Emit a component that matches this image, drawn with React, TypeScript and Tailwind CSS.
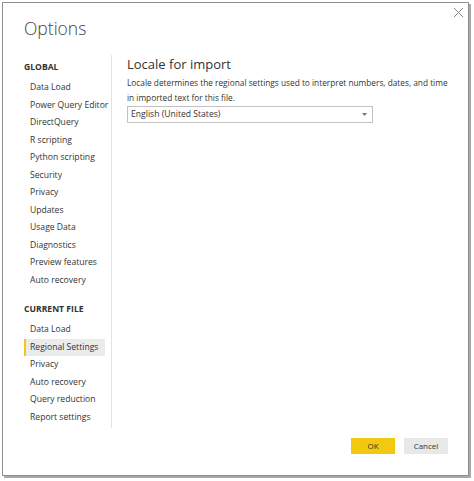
const globalItems = [
  'Data Load',
  'Power Query Editor',
  'DirectQuery',
  'R scripting',
  'Python scripting',
  'Security',
  'Privacy',
  'Updates',
  'Usage Data',
  'Diagnostics',
  'Preview features',
  'Auto recovery',
];

const fileItems = [
  'Data Load',
  'Regional Settings',
  'Privacy',
  'Auto recovery',
  'Query reduction',
  'Report settings',
];

const NavItem = ({ label, active }: { label: string; active?: boolean }) => (
  <div
    className={
      active
        ? 'flex h-[17.5px] w-[81px] items-center whitespace-nowrap border-l-2 border-[#f2c811] bg-[#ebebeb] pl-[4px] text-[8.6px] text-[#333]'
        : 'flex h-[17.5px] w-[81px] items-center whitespace-nowrap pl-[6px] text-[8.6px] text-[#333]'
    }
  >
    {label}
  </div>
);

export default function App() {
  return (
    <div className="h-[481px] w-[474px] bg-white pl-[2px] pt-[2px] font-['Open_Sans',sans-serif]">
      <div className="flex h-[474px] w-[467px] flex-col border border-[#8e8e8e] bg-white shadow-[2px_2px_0_#a9a9a9]">
        {/* header */}
        <div className="flex h-[52px] justify-between">
          <div className="pl-[21px] pt-[14px] text-[17.5px] font-light leading-[22px] text-[#444]">
            Options
          </div>
          <div className="pr-[4px] pt-[4px]">
            <svg width="11" height="11" viewBox="0 0 11 11">
              <path d="M1 1L10 10M10 1L1 10" stroke="#8a8a8a" strokeWidth="1" fill="none" />
            </svg>
          </div>
        </div>

        {/* body */}
        <div className="flex h-[373px]">
          <div className="w-[109px] border-r border-[#e3e3e3] pl-[21px]">
            <div className="mt-[5px] mb-[5px] h-[14px] text-[8.6px] leading-[14px] font-bold text-[#333]">
              GLOBAL
            </div>
            {globalItems.map((item) => (
              <NavItem key={'g' + item} label={item} />
            ))}
            <div className="mt-[13px] mb-[5px] h-[14px] text-[8.6px] leading-[14px] font-bold text-[#333]">
              CURRENT FILE
            </div>
            {fileItems.map((item) => (
              <NavItem key={'f' + item} label={item} active={item === 'Regional Settings'} />
            ))}
          </div>

          <div className="flex-1 pl-[15px]">
            <div className="h-[18px] text-[13px] leading-[18px] text-[#333]">Locale for import</div>
            <p className="mt-[3px] w-[322px] text-[8.3px] leading-[14.5px] text-[#333]">
              Locale determines the regional settings used to interpret numbers, dates, and time in
              imported text for this file.
            </p>
            <div className="mt-[1px] flex h-[17px] w-[246px] items-center justify-between border border-[#c2c2c2] pl-[3px] pr-[5px] text-[8.6px] text-[#333]">
              <span>English (United States)</span>
              <svg width="5" height="3" viewBox="0 0 5 3">
                <path d="M0 0H5L2.5 3Z" fill="#777" />
              </svg>
            </div>
          </div>
        </div>

        {/* footer */}
        <div className="flex justify-end gap-[9px] pr-[20px] pt-[10px]">
          <button className="flex h-[16px] w-[44px] items-center justify-center bg-[#f2c811] text-[8px] text-[#333]">
            OK
          </button>
          <button className="flex h-[16px] w-[44px] items-center justify-center bg-[#e8e8e8] text-[8px] text-[#333]">
            Cancel
          </button>
        </div>
      </div>
    </div>
  );
}
